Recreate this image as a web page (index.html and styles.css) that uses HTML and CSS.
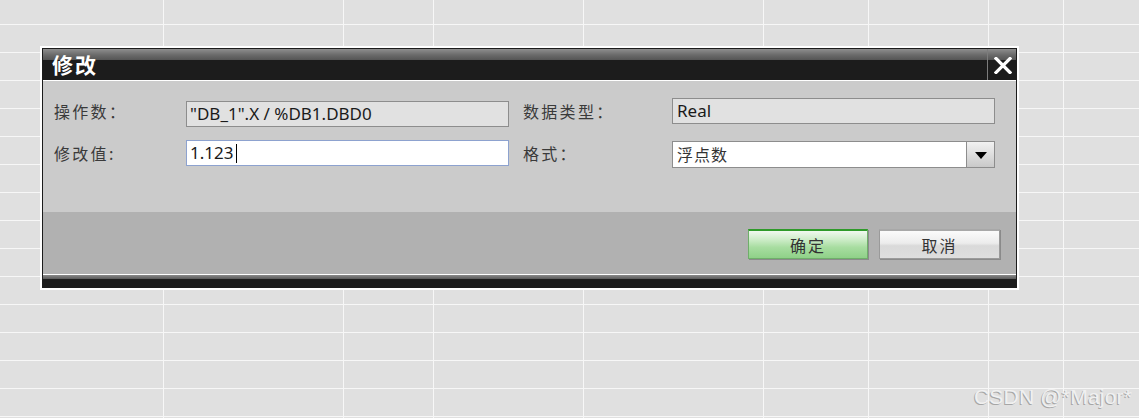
FILE: index.html
```html
<!DOCTYPE html>
<html lang="zh-CN">
<head>
<meta charset="utf-8">
<title>修改</title>
<link rel="stylesheet" href="styles.css">
</head>
<body>
<div class="sheet">
  <div class="col c1"></div>
  <div class="col c2"></div>
  <div class="col c3"></div>
  <div class="col c4"></div>
  <div class="col c5"></div>
  <div class="col c6"></div>
  <div class="col c7"></div>
  <div class="col c8"></div>
  <div class="col c9"></div>
</div>

<div class="dialog">
  <div class="titlebar">
    <div class="title">修改</div>
    <button class="close" type="button" aria-label="关闭">
      <svg width="18" height="17" viewBox="0 0 18 17"><path d="M2 1.5 L16 15.5 M16 1.5 L2 15.5" stroke="#fff" stroke-width="3.2" stroke-linecap="square" fill="none"/></svg>
    </button>
  </div>
  <div class="body">
    <div class="form">
      <div class="label">操作数：</div>
      <div class="field readonly left top-end">"DB_1".X / %DB1.DBD0</div>
      <div class="label label-right">数据类型：</div>
      <div class="field readonly right top-start">Real</div>

      <div class="label">修改值:</div>
      <div class="field editable left top-start">1.123<span class="caret"></span></div>
      <div class="label label-right">格式：</div>
      <div class="select top-end">
        <span class="select-text">浮点数</span>
        <span class="select-btn"><svg width="12" height="7" viewBox="0 0 12 7"><path d="M0 0 H12 L6 7 Z" fill="#000"/></svg></span>
      </div>
    </div>
  </div>
  <div class="actions">
    <button class="btn ok" type="button">确定</button>
    <button class="btn cancel" type="button">取消</button>
  </div>
  <div class="footer"></div>
</div>

<div class="watermark">CSDN @*Major*</div>
</body>
</html>
```

FILE: styles.css
```css
html, body {
  margin: 0;
  padding: 0;
}
body {
  width: 1139px;
  height: 418px;
  overflow: hidden;
  position: relative;
  background: #e0e0e0;
  font-family: "Noto Sans", "Noto Sans CJK SC", sans-serif;
}

/* background spreadsheet grid */
.sheet {
  display: flex;
  height: 418px;
  background: repeating-linear-gradient(to bottom, #e0e0e0 0, #e0e0e0 24px, #f7f7f7 24px, #f7f7f7 25px, #e0e0e0 25px, #e0e0e0 28px);
}
.col {
  flex: none;
  border-right: 1px solid #f7f7f7;
}
.c1 { width: 163px; }
.c2 { width: 179px; }
.c3 { width: 89px; }
.c4 { width: 149px; }
.c5 { width: 179px; }
.c6 { width: 104px; }
.c7 { width: 119px; }
.c8 { width: 74px; }
.c9 { flex: 1; border-right: none; }

/* dialog */
.dialog {
  position: absolute;
  left: 40px;
  top: 46px;
  width: 979px;
  height: 244px;
  box-sizing: border-box;
  border: 2px solid #fff;
  background: #1c1c1c;
  padding: 1px 1px 0 1px;
  display: flex;
  flex-direction: column;
}

.titlebar {
  flex: none;
  height: 32px;
  box-sizing: border-box;
  border-bottom: 1px solid #fff;
  background: linear-gradient(to bottom, #8e8e8e 0, #6a6a6a 6px, #555 11px, #1c1c1c 11px, #1c1c1c 100%);
  display: flex;
  justify-content: space-between;
  align-items: stretch;
}
.title {
  padding-left: 9px;
  color: #fff;
  font-family: "Noto Sans CJK SC", sans-serif;
  font-weight: 700;
  font-size: 21px;
  letter-spacing: 2px;
  line-height: 31px;
}
.close {
  width: 29px;
  margin: 0;
  padding: 0 0 0 1px;
  border: none;
  border-left: 1px solid #7c7c7c;
  background: transparent;
  display: flex;
  align-items: center;
  justify-content: center;
}
.close svg { display: block; margin-top: 1px; }

.body {
  flex: none;
  height: 131px;
  box-sizing: border-box;
  background: #cbcbcb;
  padding: 17px 21px 0 11px;
}
.form {
  display: grid;
  grid-template-columns: 132px 323px 163px 323px;
  grid-template-rows: 29px 28px;
  row-gap: 13px;
}
.label {
  align-self: center;
  padding-bottom: 3px;
  font-family: "Noto Sans CJK SC", sans-serif;
  font-size: 16px;
  letter-spacing: 2.3px;
  color: #3a3a3a;
  line-height: 20px;
}
.label-right { padding-left: 14px; }

.field {
  box-sizing: border-box;
  height: 26px;
  border: 1px solid #8d8d8d;
  font-size: 17px;
  line-height: 24px;
  color: #1a1a1a;
  white-space: nowrap;
  display: flex;
  align-items: center;
}
.field.left { padding: 0 3px; }
.field.right { padding: 0 4px; }
.readonly { background: #e1e1e1; }
.editable {
  background: #fff;
  border-color: #8da2cf;
}
.caret {
  display: inline-block;
  width: 1px;
  height: 19px;
  margin-left: 3px;
  background: #000;
}
.top-start { align-self: start; }
.top-end { align-self: end; }

.select {
  box-sizing: border-box;
  height: 27px;
  border: 1px solid #8d8d8d;
  background: #fff;
  display: flex;
}
.select-text {
  flex: 1;
  padding-left: 4px;
  font-family: "Noto Sans CJK SC", sans-serif;
  font-size: 16px;
  letter-spacing: 1px;
  color: #333;
  line-height: 25px;
}
.select-btn {
  width: 27px;
  border-left: 1px solid #8d8d8d;
  background: linear-gradient(to bottom, #f2f2f2 0%, #dedede 50%, #c9c9c9 100%);
  display: flex;
  align-items: center;
  justify-content: center;
}
.select-btn svg { display: block; margin-top: 1px; }

.actions {
  flex: none;
  height: 63px;
  box-sizing: border-box;
  border-bottom: 1px solid #fff;
  background: #b1b1b1;
  display: flex;
  justify-content: flex-end;
  align-items: flex-start;
  gap: 11px;
  padding: 17px 16px 0 0;
}
.btn {
  box-sizing: border-box;
  height: 30px;
  margin: 0;
  padding: 0;
  font-family: "Noto Sans CJK SC", sans-serif;
  font-size: 16px;
  letter-spacing: 2px;
  color: #333;
  line-height: 26px;
  box-shadow: 1px 1px 0 #8a8a8a;
}
.ok {
  width: 120px;
  border: 1px solid #6fae6a;
  border-top: 2px solid #2f9a2a;
  background: linear-gradient(to bottom, #f1f9f0 0%, #c9ebc4 35%, #a8dda1 60%, #8fd188 100%);
}
.cancel {
  width: 121px;
  border: 1px solid #9a9a9a;
  border-top: 2px solid #a8a8a8;
  background: linear-gradient(to bottom, #fbfbfb 0%, #ececec 45%, #d9d9d9 55%, #dedede 100%);
}

.footer {
  flex: 1;
  background: linear-gradient(to bottom, #8a8a8a 0, #5a5a5a 4px, #1c1c1c 4px, #1c1c1c 100%);
}

.watermark {
  position: absolute;
  left: 974px;
  top: 385px;
  font-family: "Liberation Sans", sans-serif;
  font-size: 21px;
  line-height: 24px;
  letter-spacing: 0.2px;
  color: #f0f0f0;
  text-shadow: -1px 1px 0 #a6a6a6;
  white-space: nowrap;
}
```
